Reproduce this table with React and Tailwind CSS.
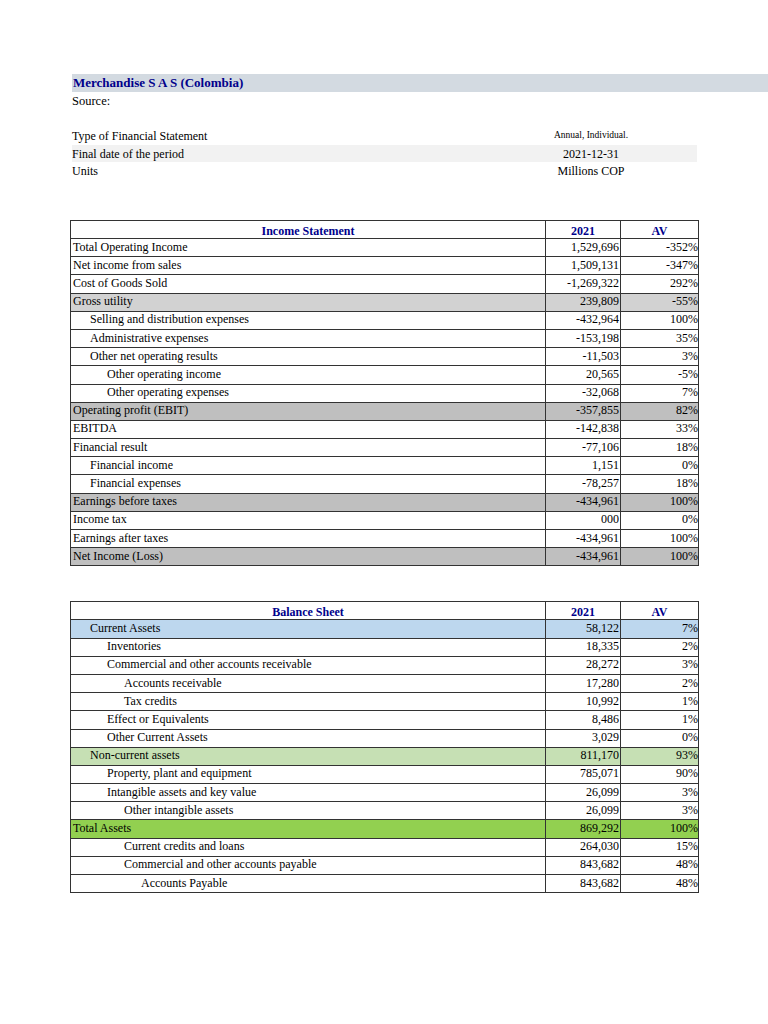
import React from "react";

// indent levels -> padding-left classes
const indent = ["pl-[2px]", "pl-[19px]", "pl-[36px]", "pl-[53px]", "pl-[70px]"];

const incomeRows = [
  { label: "Total Operating Income", value: "1,529,696", av: "-352%", lvl: 0 },
  { label: "Net income from sales", value: "1,509,131", av: "-347%", lvl: 0 },
  { label: "Cost of Goods Sold", value: "-1,269,322", av: "292%", lvl: 0 },
  { label: "Gross utility", value: "239,809", av: "-55%", lvl: 0, bg: "bg-[#d2d2d2]" },
  { label: "Selling and distribution expenses", value: "-432,964", av: "100%", lvl: 1 },
  { label: "Administrative expenses", value: "-153,198", av: "35%", lvl: 1 },
  { label: "Other net operating results", value: "-11,503", av: "3%", lvl: 1 },
  { label: "Other operating income", value: "20,565", av: "-5%", lvl: 2 },
  { label: "Other operating expenses", value: "-32,068", av: "7%", lvl: 2 },
  { label: "Operating profit (EBIT)", value: "-357,855", av: "82%", lvl: 0, bg: "bg-[#bfbfbf]" },
  { label: "EBITDA", value: "-142,838", av: "33%", lvl: 0 },
  { label: "Financial result", value: "-77,106", av: "18%", lvl: 0 },
  { label: "Financial income", value: "1,151", av: "0%", lvl: 1 },
  { label: "Financial expenses", value: "-78,257", av: "18%", lvl: 1 },
  { label: "Earnings before taxes", value: "-434,961", av: "100%", lvl: 0, bg: "bg-[#bfbfbf]" },
  { label: "Income tax", value: "000", av: "0%", lvl: 0 },
  { label: "Earnings after taxes", value: "-434,961", av: "100%", lvl: 0 },
  { label: "Net Income (Loss)", value: "-434,961", av: "100%", lvl: 0, bg: "bg-[#bfbfbf]" },
];

const balanceRows = [
  { label: "Current Assets", value: "58,122", av: "7%", lvl: 1, bg: "bg-[#bdd7ee]" },
  { label: "Inventories", value: "18,335", av: "2%", lvl: 2 },
  { label: "Commercial and other accounts receivable", value: "28,272", av: "3%", lvl: 2 },
  { label: "Accounts receivable", value: "17,280", av: "2%", lvl: 3 },
  { label: "Tax credits", value: "10,992", av: "1%", lvl: 3 },
  { label: "Effect or Equivalents", value: "8,486", av: "1%", lvl: 2 },
  { label: "Other Current Assets", value: "3,029", av: "0%", lvl: 2 },
  { label: "Non-current assets", value: "811,170", av: "93%", lvl: 1, bg: "bg-[#c6e0b4]" },
  { label: "Property, plant and equipment", value: "785,071", av: "90%", lvl: 2 },
  { label: "Intangible assets and key value", value: "26,099", av: "3%", lvl: 2 },
  { label: "Other intangible assets", value: "26,099", av: "3%", lvl: 3 },
  { label: "Total Assets", value: "869,292", av: "100%", lvl: 0, bg: "bg-[#92d050]" },
  { label: "Current credits and loans", value: "264,030", av: "15%", lvl: 3 },
  { label: "Commercial and other accounts payable", value: "843,682", av: "48%", lvl: 3 },
  { label: "Accounts Payable", value: "843,682", av: "48%", lvl: 4 },
];

function Sheet({ title, rows }) {
  return (
    <table className="ml-[70px] w-[628px] table-fixed border-collapse border border-[#333] text-[12px] leading-[14px] text-black">
      <colgroup>
        <col className="w-[475px]" />
        <col className="w-[75px]" />
        <col className="w-[78px]" />
      </colgroup>
      <thead>
        <tr className="h-[18px]">
          <th className="border-b border-[#333] pt-[2px] text-center font-bold text-[#00008b]">{title}</th>
          <th className="border border-[#333] pt-[2px] text-center font-bold text-[#00008b]">2021</th>
          <th className="border border-[#333] pt-[2px] text-center font-bold text-[#00008b]">AV</th>
        </tr>
      </thead>
      <tbody>
        {rows.map((r, i) => (
          <tr key={i} className={`h-[18.2px] ${r.bg || ""}`}>
            <td className={`border-b border-[#333] pb-[2px] whitespace-nowrap ${indent[r.lvl]}`}>{r.label}</td>
            <td className="border border-[#333] pb-[2px] pr-[1px] text-right">{r.value}</td>
            <td className="border border-[#333] pb-[2px] pr-0 text-right">{r.av}</td>
          </tr>
        ))}
      </tbody>
    </table>
  );
}

export default function App() {
  return (
    <div className="min-h-[1024px] w-[768px] bg-white pt-[74px] font-['Liberation_Serif','Times_New_Roman',serif] text-black">
      {/* company header */}
      <div className="ml-[72px] h-[18px] bg-[#d3dae1] pl-[1px] text-[13px] font-bold leading-[18px] text-[#00008b]">
        Merchandise S A S (Colombia)
      </div>
      <div className="ml-[72px] h-[18px] text-[12.5px] leading-[18px]">Source:</div>
      <div className="h-[17px]" />

      {/* statement info */}
      <div className="ml-[72px] w-[625px] text-[12px]">
        <div className="flex h-[18px] items-center">
          <div className="flex-1">Type of Financial Statement</div>
          <div className="w-[212px] pb-[2px] text-center text-[9.5px]">Annual, Individual.</div>
        </div>
        <div className="flex h-[17px] items-center bg-[#f2f2f2]">
          <div className="flex-1">Final date of the period</div>
          <div className="w-[212px] text-center">2021-12-31</div>
        </div>
        <div className="flex h-[17px] items-center">
          <div className="flex-1">Units</div>
          <div className="w-[212px] text-center">Millions COP</div>
        </div>
      </div>

      <div className="h-[41px]" />
      <Sheet title="Income Statement" rows={incomeRows} />

      <div className="h-[35px]" />
      <Sheet title="Balance Sheet" rows={balanceRows} />
    </div>
  );
}
